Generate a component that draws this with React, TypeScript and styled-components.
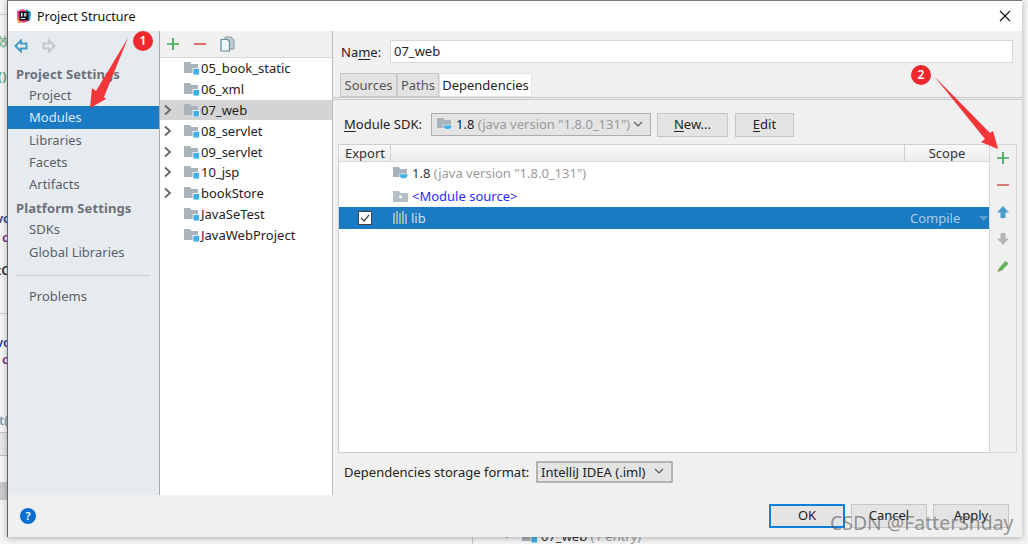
import React from "react";
import styled, { createGlobalStyle } from "styled-components";

const Global = createGlobalStyle`
  html, body { margin: 0; padding: 0; background: #f3f3f3; }
  #root { width: 1028px; height: 544px; overflow: hidden; }
  * { box-sizing: border-box; }
`;

const Desktop = styled.div`
  position: relative;
  width: 1028px;
  height: 544px;
  overflow: hidden;
  background: #f4f4f4;
  font-family: "Noto Sans", "Open Sans", sans-serif;
  font-size: 13px;
  color: #2b2b2b;
`;

const BackBit = styled.span<{ $x: number; $y: number; $c: string }>`
  position: absolute;
  left: ${(p) => p.$x}px;
  top: ${(p) => p.$y}px;
  color: ${(p) => p.$c};
  font-weight: 600;
  font-size: 13px;
  line-height: 16px;
`;

const BackBand = styled.div<{ $y: number; $h: number; $c: string }>`
  position: absolute;
  left: 0;
  width: 8px;
  top: ${(p) => p.$y}px;
  height: ${(p) => p.$h}px;
  background: ${(p) => p.$c};
`;

const BackEntry = styled.div`
  position: absolute;
  left: 472px;
  top: 527px;
  width: 556px;
  height: 17px;
  display: flex;
  align-items: center;
  overflow: hidden;
  border-left: 1px solid #c9c9c9;
  font-size: 13px;
  white-space: nowrap;
  color: #333;
`;

const BackTriangle = styled.span`
  margin-left: 31px;
  margin-right: 12px;
  width: 0;
  height: 0;
  border-left: 3px solid transparent;
  border-right: 3px solid transparent;
  border-top: 4px solid #444;
`;

const BackLabel = styled.span`
  margin-left: 3px;
`;

const Dim = styled.span`
  color: #999;
`;

const Win = styled.div`
  position: absolute;
  left: 7px;
  top: 0;
  width: 1015px;
  height: 537px;
  display: flex;
  flex-direction: column;
  background: #f0f0f0;
  border-top: 1px solid #777;
  border-left: 1px solid #666;
  box-shadow: 0 1px 6px rgba(0, 0, 0, 0.3);
`;

const TitleBar = styled.div`
  height: 30px;
  flex: none;
  display: flex;
  align-items: center;
  background: #fff;
  padding: 0 11px 0 9px;
  font-size: 12.5px;
  color: #111;
`;

const TitleText = styled.span`
  margin-left: 6px;
  flex: 1;
`;

const Body = styled.div`
  flex: 1;
  min-height: 0;
  display: flex;
`;

const Sidebar = styled.nav`
  width: 152px;
  flex: none;
  background: #e6ebf0;
  border-right: 1px solid #a9a9a9;
  display: flex;
  flex-direction: column;
`;

const NavArrows = styled.div`
  height: 29px;
  flex: none;
  padding-left: 6px;
  display: flex;
  gap: 14px;
  align-items: center;
`;

const SectionTitle = styled.div<{ $top: number }>`
  margin-top: ${(p) => p.$top}px;
  height: 20px;
  line-height: 20px;
  padding-left: 8px;
  font-weight: 700;
  color: #6c707a;
  letter-spacing: 0.1px;
`;

const NavItem = styled.div<{ $active?: boolean }>`
  height: 22.3px;
  line-height: 22px;
  padding-left: 21px;
  color: ${(p) => (p.$active ? "#dfeaf5" : "#5b5f66")};
  background: ${(p) => (p.$active ? "#1b7ac4" : "transparent")};
`;

const NavRule = styled.div`
  height: 1px;
  margin: 12px 9px 9px 8px;
  background: #cfcfcf;
`;

const TreePanel = styled.div`
  width: 173px;
  flex: none;
  background: #fff;
  border-right: 1px solid #bdbdbd;
  display: flex;
  flex-direction: column;
`;

const TreeToolbar = styled.div`
  height: 27px;
  background: #f0f0f0;
  border-bottom: 1px solid #d6d6d6;
  display: flex;
  align-items: center;
  gap: 13px;
  padding-left: 6px;
  flex: none;
`;

const TreeRow = styled.div<{ $selected?: boolean }>`
  height: 20.8px;
  display: flex;
  align-items: center;
  padding-left: 3px;
  background: ${(p) => (p.$selected ? "#d4d4d4" : "transparent")};
  color: #222;
`;

const Chevron = styled.span`
  width: 21px;
  flex: none;
  display: flex;
  align-items: center;
`;

const RowLabel = styled.span`
  margin-left: 1px;
  white-space: nowrap;
`;

const Main = styled.div`
  flex: 1;
  min-width: 0;
  display: flex;
  flex-direction: column;
  padding-top: 9px;
`;

const NameRow = styled.div`
  display: flex;
  align-items: center;
  height: 23px;
  padding: 0 9px 0 8px;
  flex: none;
`;

const NameLabel = styled.span`
  width: 49px;
  flex: none;
  color: #222;
`;

const NameInput = styled.div`
  flex: 1;
  height: 23px;
  background: #fff;
  border: 1px solid #d8d8d8;
  line-height: 20px;
  padding-left: 3px;
  color: #222;
`;

const TabStrip = styled.div`
  margin-top: 10px;
  height: 27px;
  padding-left: 7px;
  display: flex;
  align-items: flex-start;
  border-bottom: 3px double #c8c8c8;
  flex: none;
`;

const Tab = styled.div<{ $active?: boolean; $w: number }>`
  width: ${(p) => p.$w}px;
  height: 24px;
  line-height: 23px;
  text-align: center;
  background: ${(p) => (p.$active ? "#fff" : "#e3e3e3")};
  border: 1px solid ${(p) => (p.$active ? "#e4e4e4" : "#c8c8c8")};
  color: ${(p) => (p.$active ? "#222" : "#555")};
`;

const SdkRow = styled.div`
  margin-top: 12px;
  height: 25px;
  padding-left: 11px;
  display: flex;
  align-items: center;
  flex: none;
`;

const SdkLabel = styled.span`
  width: 87px;
  flex: none;
  color: #222;
  padding-bottom: 1px;
`;

const Combo = styled.div<{ $w: number; $h: number }>`
  width: ${(p) => p.$w}px;
  height: ${(p) => p.$h}px;
  flex: none;
  display: flex;
  align-items: center;
  background: #e4e4e4;
  border: 1px solid #adadad;
  padding: 0 7px 1px 5px;
  white-space: nowrap;
  color: #222;
`;

const FormatCombo = styled(Combo)`
  padding-left: 0;
  border-width: 2px;
  border-color: #b4b4b4;
`;

const ComboText = styled.span`
  flex: 1;
  margin-left: 3px;
`;

const Btn = styled.div<{ $w: number; $primary?: boolean }>`
  width: ${(p) => p.$w}px;
  height: 24px;
  line-height: ${(p) => (p.$primary ? 19 : 21)}px;
  flex: none;
  text-align: center;
  background: #e4e4e4;
  border: ${(p) => (p.$primary ? "2px solid #0f7fd8" : "1px solid #c6c6c6")};
  color: #222;
`;

const SdkButtons = styled.div`
  display: flex;
  margin-left: 6px;
  gap: 7px;
`;

const TableWrap = styled.div`
  margin: 7px 5px 0 5px;
  height: 309px;
  display: flex;
  flex: none;
`;

const Table = styled.div`
  flex: 1;
  min-width: 0;
  background: #fff;
  border: 1px solid #cfcfcf;
  border-right: none;
  display: flex;
  flex-direction: column;
`;

const TableHead = styled.div`
  height: 17px;
  flex: none;
  background: linear-gradient(#fafafa, #ececec);
  border-bottom: 1px solid #d9d9d9;
  display: grid;
  grid-template-columns: 52px 1fr 84px;
  line-height: 16px;
  color: #333;
`;

const HeadCell = styled.div<{ $center?: boolean }>`
  padding-left: ${(p) => (p.$center ? 0 : 6)}px;
  text-align: ${(p) => (p.$center ? "center" : "left")};
  border-right: 1px solid #cfcfcf;
  &:last-child { border-right: none; }
`;

const DepRow = styled.div<{ $selected?: boolean; $h: number }>`
  height: ${(p) => p.$h}px;
  display: grid;
  grid-template-columns: 52px 1fr 84px;
  align-items: center;
  background: ${(p) => (p.$selected ? "#1b7ac4" : "transparent")};
  color: ${(p) => (p.$selected ? "#cfe0ee" : "#333")};
`;

const DepCheck = styled.div`
  display: flex;
  justify-content: center;
  padding-right: 1px;
`;

const DepName = styled.div`
  display: flex;
  align-items: center;
  gap: 3px;
  padding-left: 2px;
`;

const Grey = styled.span`
  color: #9a9a9a;
`;

const Link = styled.span`
  color: #2a2aff;
`;

const ScopeCell = styled.div`
  display: flex;
  align-items: center;
  justify-content: space-between;
  padding: 0 1px 0 5px;
  color: #a9cbe6;
`;

const SideTools = styled.div`
  width: 28px;
  flex: none;
  border: 1px solid #d6d6d6;
  display: flex;
  flex-direction: column;
  align-items: center;
  padding-top: 4px;
  gap: 9px;
`;

const ToolIcon = styled.div`
  width: 18px;
  height: 18px;
  display: flex;
  align-items: center;
  justify-content: center;
`;

const FormatRow = styled.div`
  margin-top: 8px;
  padding-left: 11px;
  height: 22px;
  display: flex;
  align-items: center;
  flex: none;
  color: #222;
`;

const FormatLabel = styled.span`
  width: 192px;
  flex: none;
  padding-bottom: 1px;
`;

const Footer = styled.div`
  height: 42px;
  flex: none;
  background: #f0f0f0;
  display: flex;
  align-items: flex-start;
  padding: 9px 13px 0 12px;
`;

const HelpBadge = styled.div`
  width: 16px;
  height: 16px;
  margin-top: 4px;
  border-radius: 50%;
  background: #0b6fd1;
  color: #fff;
  font-size: 11px;
  font-weight: 600;
  line-height: 16px;
  text-align: center;
`;

const FooterButtons = styled.div`
  margin-left: auto;
  display: flex;
  gap: 6px;
`;

const Overlay = styled.svg`
  position: absolute;
  left: 0;
  top: 0;
  pointer-events: none;
`;

const Badge = styled.div<{ $x: number; $y: number }>`
  position: absolute;
  left: ${(p) => p.$x}px;
  top: ${(p) => p.$y}px;
  width: 20px;
  height: 20px;
  border-radius: 50%;
  background: #f0282d;
  color: #fff;
  font-size: 12px;
  font-weight: 600;
  line-height: 20px;
  text-align: center;
`;

const Watermark = styled.div`
  position: absolute;
  left: 830px;
  top: 510px;
  font-size: 19.4px;
  line-height: 26px;
  color: rgba(90, 90, 90, 0.62);
  white-space: nowrap;
`;

const Under = styled.span`
  text-decoration: underline;
  text-underline-offset: 2px;
`;

const Plus = ({ c = "#3aa655" }: { c?: string }) => (
  <svg width="14" height="14" viewBox="0 0 14 14">
    <path d="M7 1v12M1 7h12" stroke={c} strokeWidth="1.7" />
  </svg>
);
const Minus = ({ c = "#d9574f" }: { c?: string }) => (
  <svg width="14" height="14" viewBox="0 0 14 14">
    <path d="M1 7h12" stroke={c} strokeWidth="1.7" />
  </svg>
);
const Folder = () => (
  <svg width="16" height="14" viewBox="0 0 16 14">
    <path d="M0 1h6l1.5 2H14v9H0z" fill="#a8b3ba" />
    <rect x="9" y="7.5" width="6.5" height="6.5" fill="#3fb0e8" stroke="#fff" strokeWidth="0.8" />
  </svg>
);
const SdkFolder = () => (
  <svg width="16" height="14" viewBox="0 0 16 14">
    <path d="M0 1h6l1.5 2H14v8H0z" fill="#a8b3ba" />
    <path d="M6 8h9c0 3-1.5 4.5-4.5 4.5S6 11 6 8z" fill="#3fb0e8" stroke="#fff" strokeWidth="0.6" />
  </svg>
);
const SourceFolder = () => (
  <svg width="16" height="12" viewBox="0 0 16 12">
    <path d="M0 1h6l1.5 2H15v9H0z" fill="#b4bec5" />
    <circle cx="7.5" cy="7" r="1.4" fill="#fff" />
  </svg>
);
const LibIcon = () => (
  <svg width="15" height="14" viewBox="0 0 15 14">
    <rect x="0" y="2" width="2" height="11" fill="#9fb1ba" />
    <rect x="3" y="0" width="2" height="13" fill="#8fb8a0" />
    <rect x="6" y="2" width="2" height="11" fill="#7fc09a" />
    <rect x="9" y="0" width="2" height="13" fill="#8db6cf" />
    <rect x="12" y="3" width="2" height="10" fill="#9fb1ba" />
  </svg>
);
const Caret = () => (
  <svg width="10" height="12" viewBox="0 0 10 12">
    <path d="M2 1.5L7 6 2 10.5" fill="none" stroke="#666" strokeWidth="1.8" />
  </svg>
);
const ComboArrow = () => (
  <svg width="10" height="7" viewBox="0 0 10 7">
    <path d="M1 1l4 4 4-4" fill="none" stroke="#555" strokeWidth="1.1" />
  </svg>
);
const NavArrow = ({ dir, c }: { dir: "l" | "r"; c: string }) => (
  <svg width="14" height="14" viewBox="0 0 14 14">
    <path
      d={dir === "l" ? "M7 1.5L1.5 7 7 12.5V9.5h5.5v-5H7z" : "M7 1.5L12.5 7 7 12.5V9.5H1.5v-5H7z"}
      fill="none"
      stroke={c}
      strokeWidth="2"
    />
  </svg>
);
const CopyIcon = () => (
  <svg width="15" height="16" viewBox="0 0 15 16">
    <path d="M5 1h6l3 3v9H5z" fill="#c3ccd2" stroke="#8b979f" />
    <path d="M1 3.5h6.5l2 2V15H1z" fill="#f2f5f7" stroke="#5e8aa6" strokeWidth="1.2" />
  </svg>
);
const VArrow = ({ dir, c }: { dir: "u" | "d"; c: string }) => (
  <svg width="14" height="14" viewBox="0 0 14 14">
    <path d={dir === "u" ? "M7 1l6 6.5H9.5V13h-5V7.5H1z" : "M7 13l6-6.5H9.5V1h-5v5.5H1z"} fill={c} />
  </svg>
);
const Pencil = () => (
  <svg width="14" height="14" viewBox="0 0 14 14">
    <path d="M3 9l6.5-7 3 2.5L6 11.5z" fill="#5fb255" />
    <path d="M3 9l3 2.5L1.5 13z" fill="#8a8a6a" />
  </svg>
);
const CheckBox = () => (
  <svg width="14" height="14" viewBox="0 0 14 14">
    <rect x="0.5" y="0.5" width="13" height="13" fill="#fff" stroke="#444" />
    <path d="M3 7l3 3 5-6" fill="none" stroke="#444" strokeWidth="1.2" />
  </svg>
);
const AppLogo = () => (
  <svg width="14" height="14" viewBox="0 0 14 14">
    <path d="M0 2l6-2 8 4-2 8-6 2-6-3z" fill="#f0428a" />
    <path d="M9 0l5 3-1 9-4-4z" fill="#1d9fe0" />
    <path d="M0 7l4 7H1z" fill="#f5a020" />
    <rect x="2.5" y="2.5" width="9" height="9" fill="#111" />
    <rect x="4" y="9" width="4" height="1" fill="#fff" />
    <rect x="4" y="4" width="1.5" height="3.5" fill="#fff" />
    <rect x="7" y="4" width="2.5" height="3.5" fill="#bbb" />
  </svg>
);
const CloseX = () => (
  <svg width="12" height="12" viewBox="0 0 12 12">
    <path d="M1 1l10 10M11 1L1 11" stroke="#111" strokeWidth="1.1" />
  </svg>
);
const ScopeArrow = () => (
  <svg width="9" height="5" viewBox="0 0 9 5">
    <path d="M0 0h9L4.5 5z" fill="#5a9fd0" />
  </svg>
);

const modules = [
  { name: "05_book_static" },
  { name: "06_xml" },
  { name: "07_web", caret: true, selected: true },
  { name: "08_servlet", caret: true },
  { name: "09_servlet", caret: true },
  { name: "10_jsp", caret: true },
  { name: "bookStore", caret: true },
  { name: "JavaSeTest" },
  { name: "JavaWebProject" },
];

export default function App() {
  return (
    <Desktop>
      <Global />
      <BackBand $y={14} $h={1} $c="#cfcfcf" />
      <BackBand $y={313} $h={1} $c="#cfcfcf" />
      <BackBand $y={432} $h={24} $c="#e6e6e6" />
      <BackBand $y={432} $h={1} $c="#c4c4c4" />
      <BackBand $y={455} $h={1} $c="#bdbdbd" />
      <BackBand $y={482} $h={18} $c="#c9c9c9" />
      <BackBit $x={-3} $y={33} $c="#8fbf9c">效</BackBit>
      <BackBit $x={-2} $y={68} $c="#5c9e6c">()</BackBit>
      <BackBit $x={-4} $y={210} $c="#2a3a90">vo</BackBit>
      <BackBit $x={2} $y={229} $c="#7a2a90">c</BackBit>
      <BackBit $x={-4} $y={262} $c="#333">tC</BackBit>
      <BackBit $x={-4} $y={334} $c="#2a3a90">vo</BackBit>
      <BackBit $x={2} $y={351} $c="#7a2a90">c</BackBit>
      <BackBit $x={-1} $y={412} $c="#7f9fb0">t(</BackBit>
      <BackEntry>
        <BackTriangle />
        <Folder />
        <BackLabel>
          07_web <Dim>(1 entry)</Dim>
        </BackLabel>
      </BackEntry>

      <Win>
        <TitleBar>
          <AppLogo />
          <TitleText>Project Structure</TitleText>
          <CloseX />
        </TitleBar>
        <Body>
          <Sidebar>
            <NavArrows>
              <NavArrow dir="l" c="#4a9cc8" />
              <NavArrow dir="r" c="#c2c8cc" />
            </NavArrows>
            <SectionTitle $top={4}>Project Settings</SectionTitle>
            <NavItem>Project</NavItem>
            <NavItem $active>Modules</NavItem>
            <NavItem>Libraries</NavItem>
            <NavItem>Facets</NavItem>
            <NavItem>Artifacts</NavItem>
            <SectionTitle $top={3}>Platform Settings</SectionTitle>
            <NavItem>SDKs</NavItem>
            <NavItem>Global Libraries</NavItem>
            <NavRule />
            <NavItem>Problems</NavItem>
          </Sidebar>
          <TreePanel>
            <TreeToolbar>
              <Plus />
              <Minus />
              <CopyIcon />
            </TreeToolbar>
            <div>
              {modules.map((m) => (
                <TreeRow key={m.name} $selected={m.selected}>
                  <Chevron>{m.caret ? <Caret /> : null}</Chevron>
                  <Folder />
                  <RowLabel>{m.name}</RowLabel>
                </TreeRow>
              ))}
            </div>
          </TreePanel>
          <Main>
            <NameRow>
              <NameLabel>
                Na<Under>m</Under>e:
              </NameLabel>
              <NameInput>07_web</NameInput>
            </NameRow>
            <TabStrip>
              <Tab $w={57}>Sources</Tab>
              <Tab $w={42}>Paths</Tab>
              <Tab $w={93} $active>
                Dependencies
              </Tab>
            </TabStrip>
            <SdkRow>
              <SdkLabel>
                <Under>M</Under>odule SDK:
              </SdkLabel>
              <Combo $w={220} $h={23}>
                <SdkFolder />
                <ComboText>
                  1.8 <Grey>(java version "1.8.0_131")</Grey>
                </ComboText>
                <ComboArrow />
              </Combo>
              <SdkButtons>
                <Btn $w={71}>
                  <Under>N</Under>ew...
                </Btn>
                <Btn $w={59}>
                  <Under>E</Under>dit
                </Btn>
              </SdkButtons>
            </SdkRow>
            <TableWrap>
              <Table>
                <TableHead>
                  <HeadCell>Export</HeadCell>
                  <HeadCell />
                  <HeadCell $center>Scope</HeadCell>
                </TableHead>
                <DepRow $h={22}>
                  <span />
                  <DepName>
                    <SdkFolder />
                    <span>
                      1.8 <Grey>(java version "1.8.0_131")</Grey>
                    </span>
                  </DepName>
                  <span />
                </DepRow>
                <DepRow $h={23}>
                  <span />
                  <DepName>
                    <SourceFolder />
                    <Link>&lt;Module source&gt;</Link>
                  </DepName>
                  <span />
                </DepRow>
                <DepRow $h={22} $selected>
                  <DepCheck>
                    <CheckBox />
                  </DepCheck>
                  <DepName>
                    <LibIcon />
                    <span>lib</span>
                  </DepName>
                  <ScopeCell>
                    Compile
                    <ScopeArrow />
                  </ScopeCell>
                </DepRow>
              </Table>
              <SideTools>
                <ToolIcon>
                  <Plus />
                </ToolIcon>
                <ToolIcon>
                  <Minus c="#c96a5f" />
                </ToolIcon>
                <ToolIcon>
                  <VArrow dir="u" c="#4a9cc8" />
                </ToolIcon>
                <ToolIcon>
                  <VArrow dir="d" c="#b4b4b4" />
                </ToolIcon>
                <ToolIcon>
                  <Pencil />
                </ToolIcon>
              </SideTools>
            </TableWrap>
            <FormatRow>
              <FormatLabel>Dependencies storage format:</FormatLabel>
              <FormatCombo $w={137} $h={22}>
                <ComboText>IntelliJ IDEA (.iml)</ComboText>
                <ComboArrow />
              </FormatCombo>
            </FormatRow>
          </Main>
        </Body>
        <Footer>
          <HelpBadge>?</HelpBadge>
          <FooterButtons>
            <Btn $w={76} $primary>
              OK
            </Btn>
            <Btn $w={76}>Cancel</Btn>
            <Btn $w={76}>Apply</Btn>
          </FooterButtons>
        </Footer>
      </Win>

      <Overlay width="1028" height="544" viewBox="0 0 1028 544">
        <polygon points="128,38 104,97 106,99 90,108 92,88 96,91" fill="#f4353a" />
        <polygon points="934,76 990,133 993,131 998,149 981,142 985,139" fill="#f4353a" />
      </Overlay>
      <Badge $x={133} $y={31}>1</Badge>
      <Badge $x={911} $y={65}>2</Badge>
      <Watermark>CSDN @FatterShday</Watermark>
    </Desktop>
  );
}
